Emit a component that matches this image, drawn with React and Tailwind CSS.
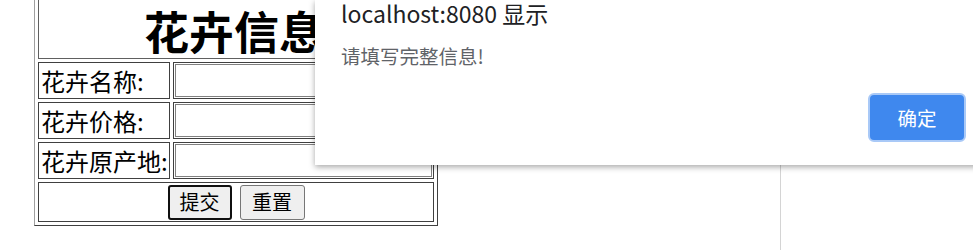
import React from 'react'

const cjk = "font-['Noto_Sans_CJK_SC',sans-serif]"

const fields = ['花卉名称:', '花卉价格:', '花卉原产地:']

const App = () => {
  return (
    <div className={`relative flex h-[250px] w-full overflow-hidden bg-white text-black ${cjk}`}>
      {/* page */}
      <div className="w-[780px] shrink-0 pl-[34px]">
        <table className="-mt-[14px] border-separate border-spacing-[3px] border border-t-[#a0a0a0] border-l-[#a0a0a0] border-r-[#404040] border-b-[#404040]">
          <tbody>
            <tr>
              <th colSpan={2} className="border border-[#606060] px-0 pt-[17px] pb-[5px] pr-[4px] text-center text-[45px] leading-[45px] font-bold">
                花卉信息
              </th>
            </tr>

            {fields.map((label) => (
              <tr key={label}>
                <td className="w-[132px] border border-[#404040] p-0 pl-[2px] text-[24px] leading-[35px] whitespace-nowrap">
                  {label}
                </td>
                <td className="w-[261px] border border-[#404040] p-[1px]">
                  <input type="text" className="block h-[33px] w-[257px] border border-[#808080] bg-white outline-none" />
                </td>
              </tr>
            ))}

            <tr>
              <td colSpan={2} className="h-[40px] border border-[#404040] p-0">
                <div className="flex items-center justify-center gap-[8px]">
                  <button className="h-[35px] w-[64px] rounded-[3px] border-2 border-[#101010] bg-[#efefef] text-[20px] leading-none">
                    提交
                  </button>
                  <button className="h-[35px] w-[65px] rounded-[3px] border border-[#767676] bg-[#efefef] text-[20px] leading-none">
                    重置
                  </button>
                </div>
              </td>
            </tr>
          </tbody>
        </table>
      </div>

      <div className="h-full flex-1 border-l border-[#d4d4d4]" />

      {/* alert dialog */}
      <div className="absolute left-[315px] top-0 flex h-[165px] w-[675px] flex-col bg-white pl-[26px] pr-[24px] shadow-[0_2px_6px_rgba(0,0,0,0.35)]">
        <div className="text-[23px] leading-[27px] text-[#202124]">localhost:8080 显示</div>
        <div className="mt-[16px] text-[19.5px] leading-[26px] text-[#5f6368]">请填写完整信息!</div>
        <div className="mt-auto mb-[23px] flex justify-end">
          <button className="h-[49px] w-[98px] rounded-[6px] border-2 border-[#a9c9f7] bg-[#3f88ee] text-[19.5px] text-white">
            确定
          </button>
        </div>
      </div>
    </div>
  )
}

export default App
